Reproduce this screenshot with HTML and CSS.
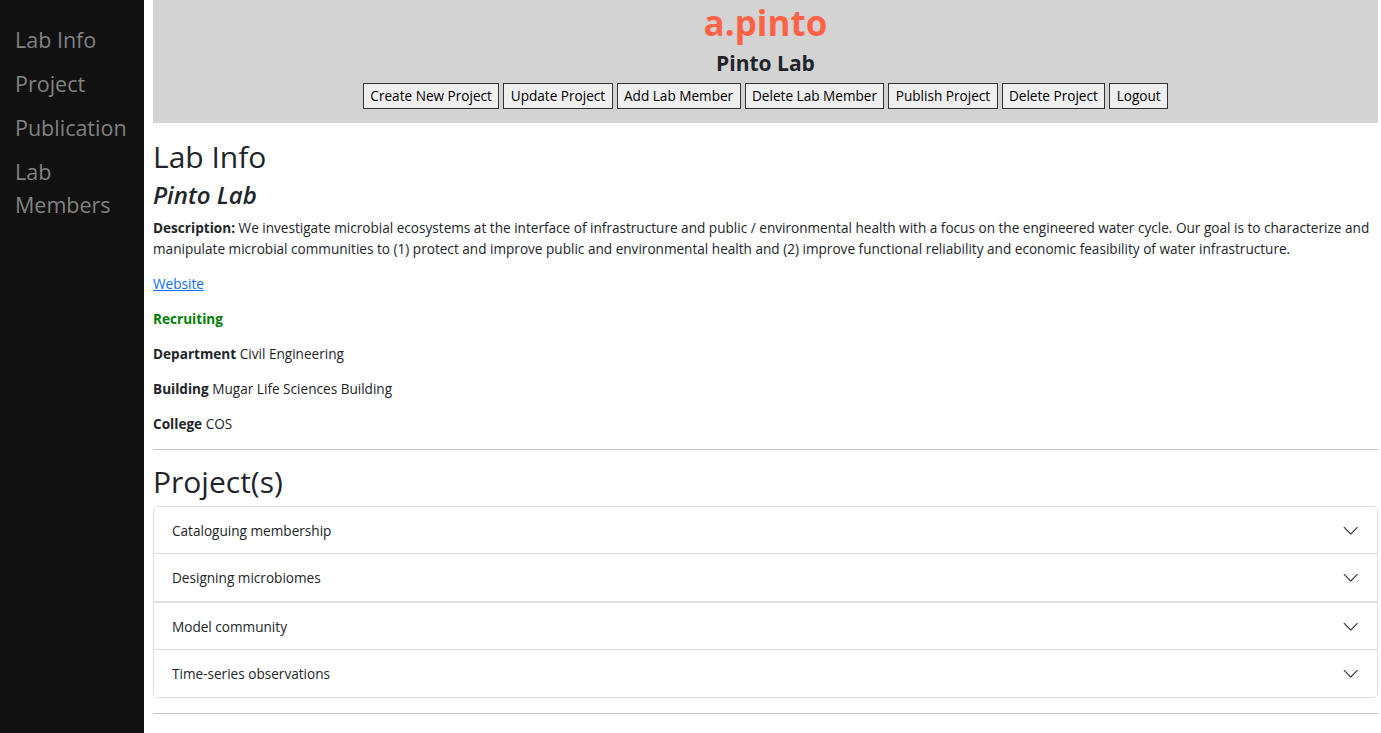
FILE: index.html
```html
<!DOCTYPE html>
<html lang="en">
<head>
    <meta charset="UTF-8">
    <meta name="viewport" content="width=device-width, initial-scale=1.0">
    <title>Pinto Lab</title>
    <link rel="stylesheet" href="styles.css">
</head>
<body>
    <nav class="sidenav">
        <a href="#">Lab Info</a>
        <a href="#">Project</a>
        <a href="#">Publication</a>
        <a href="#">Lab Members</a>
    </nav>

    <main class="main">
        <header class="labHeader">
            <h1 class="labHeader__user">a.pinto</h1>
            <h4 class="labHeader__name">Pinto Lab</h4>
            <div class="labHeader__actions">
                <button type="button">Create New Project</button>
                <button type="button">Update Project</button>
                <button type="button">Add Lab Member</button>
                <button type="button">Delete Lab Member</button>
                <button type="button">Publish Project</button>
                <button type="button">Delete Project</button>
                <button type="button">Logout</button>
            </div>
        </header>

        <section class="labInfo">
            <h2 class="pageTitle">Lab Info</h2>
            <h3 class="labName">Pinto Lab</h3>
            <p><b>Description:</b> We investigate microbial ecosystems at the interface of infrastructure and public / environmental health with a focus on the engineered water cycle. Our goal is to characterize and manipulate microbial communities to (1) protect and improve public and environmental health and (2) improve functional reliability and economic feasibility of water infrastructure.</p>
            <p><a href="#">Website</a></p>
            <p class="recruiting"><b>Recruiting</b></p>
            <p><b>Department</b> Civil Engineering</p>
            <p><b>Building</b> Mugar Life Sciences Building</p>
            <p><b>College</b> COS</p>
            <hr>

            <h2 class="pageTitle">Project(s)</h2>
            <div class="accordion">
                <div class="accordion__item">
                    <button type="button" class="accordion__btn">Cataloguing membership
                        <svg viewBox="0 0 16 16"><path d="M1.646 4.646a.5.5 0 0 1 .708 0L8 10.293l5.646-5.647a.5.5 0 0 1 .708.708l-6 6a.5.5 0 0 1-.708 0l-6-6a.5.5 0 0 1 0-.708z"/></svg>
                    </button>
                </div>
                <div class="accordion__item">
                    <button type="button" class="accordion__btn">Designing microbiomes
                        <svg viewBox="0 0 16 16"><path d="M1.646 4.646a.5.5 0 0 1 .708 0L8 10.293l5.646-5.647a.5.5 0 0 1 .708.708l-6 6a.5.5 0 0 1-.708 0l-6-6a.5.5 0 0 1 0-.708z"/></svg>
                    </button>
                </div>
                <div class="accordion__item">
                    <button type="button" class="accordion__btn">Model community
                        <svg viewBox="0 0 16 16"><path d="M1.646 4.646a.5.5 0 0 1 .708 0L8 10.293l5.646-5.647a.5.5 0 0 1 .708.708l-6 6a.5.5 0 0 1-.708 0l-6-6a.5.5 0 0 1 0-.708z"/></svg>
                    </button>
                </div>
                <div class="accordion__item">
                    <button type="button" class="accordion__btn">Time-series observations
                        <svg viewBox="0 0 16 16"><path d="M1.646 4.646a.5.5 0 0 1 .708 0L8 10.293l5.646-5.647a.5.5 0 0 1 .708.708l-6 6a.5.5 0 0 1-.708 0l-6-6a.5.5 0 0 1 0-.708z"/></svg>
                    </button>
                </div>
            </div>
            <hr>
        </section>
    </main>
</body>
</html>
```

FILE: styles.css
```css
* {
    box-sizing: border-box;
}
body {
    margin: 0px;
    display: flex;
    font-family: "Open Sans", "Noto Sans", sans-serif;
    font-size: 13.6px;
    line-height: 21px;
    color: #212529;
    background-color: #fff;
}
h1, h2, h3, h4, p {
    margin: 0px;
}
.sidenav {
    width: 144px;
    flex-shrink: 0;
    min-height: 100vh;
    background-color: #111;
    padding-top: 18px;
}
.sidenav a {
    display: block;
    padding: 5px 8px 6px 15px;
    font-size: 21.5px;
    line-height: 33px;
    color: #818181;
    text-decoration: none;
}
.main {
    flex: 1;
    padding: 0px 3px 0px 9px;
}
.labHeader {
    background-color: lightgray;
    text-align: center;
    padding-top: 2px;
    padding-bottom: 14px;
}
.labHeader__user {
    color: tomato;
    font-size: 35px;
    line-height: 1.2;
    font-weight: 700;
    margin-bottom: 7px;
}
.labHeader__name {
    font-size: 21px;
    line-height: 1.2;
    font-weight: 700;
    margin-bottom: 7px;
}
.labHeader__actions {
    display: flex;
    justify-content: center;
    gap: 4px;
}
.labHeader__actions button {
    font-family: inherit;
    font-size: 13.6px;
    line-height: 20px;
    padding: 2px 6.4px;
    color: #000;
    background-color: #efefef;
    border: 1px solid #333;
    border-radius: 0px;
}
.labInfo {
    padding-top: 16px;
}
.pageTitle {
    font-size: 30px;
    font-weight: 500;
    line-height: 1.2;
    margin-bottom: 6px;
}
.labName {
    font-size: 24px;
    font-style: italic;
    font-weight: 600;
    line-height: 1.2;
    margin-bottom: 7px;
}
.labInfo p {
    margin-bottom: 14px;
}
.labInfo a {
    color: #0d6efd;
}
.recruiting {
    color: green;
}
hr {
    margin: 15px 0px 14px;
    border: 0px;
    border-top: 1px solid #c8c8c8;
}
.accordion {
    border: 1px solid #dfdfdf;
    border-radius: 5px;
    overflow: hidden;
}
.accordion__item + .accordion__item {
    border-top: 1px solid #dfdfdf;
}
.accordion__item:nth-child(3) {
    border-top-width: 2px;
}
.accordion__btn {
    width: 100%;
    display: flex;
    justify-content: space-between;
    align-items: center;
    padding: 13px 17.5px 12.5px 18px;
    font-family: inherit;
    font-size: 13.6px;
    line-height: 21px;
    color: #212529;
    background-color: #fff;
    border: 0px;
    text-align: left;
}
.accordion__btn svg {
    width: 17.5px;
    height: 17.5px;
    fill: #333;
}
```
